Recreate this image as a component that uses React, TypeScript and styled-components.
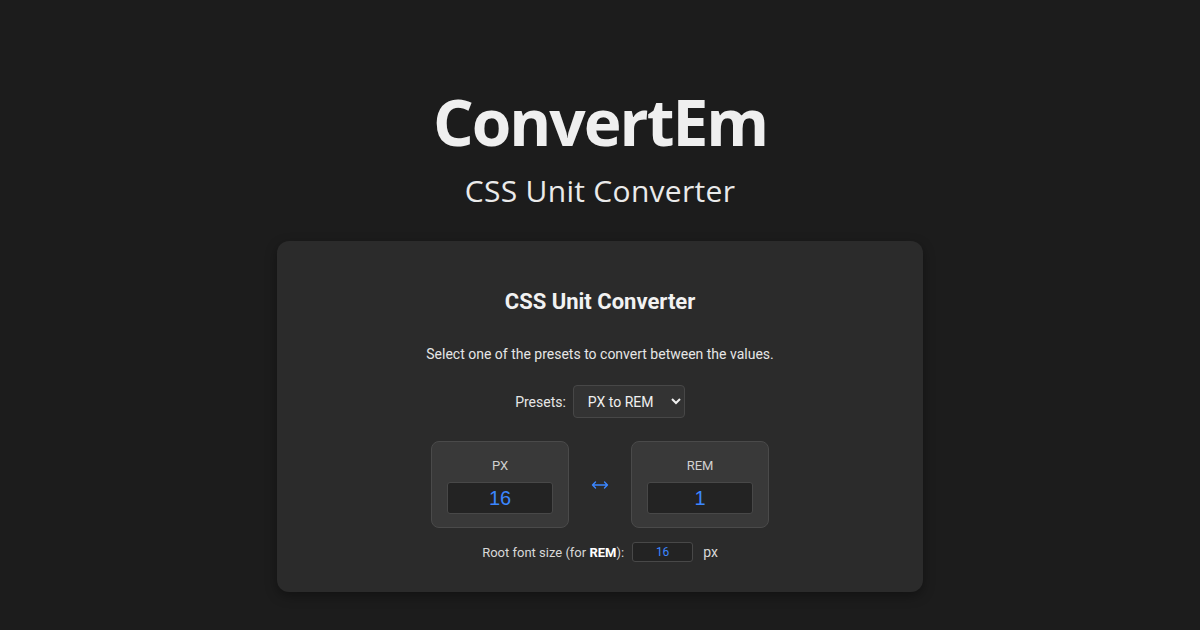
import styled, { createGlobalStyle } from "styled-components";
import { useState } from "react";

const GlobalStyle = createGlobalStyle`
  html, body {
    margin: 0;
    padding: 0;
    background: #1c1c1c;
  }
  body {
    font-family: Roboto, "Liberation Sans", Arial, sans-serif;
    color: #eeeeee;
  }
`;

const Page = styled.main`
  width: 1200px;
  height: 630px;
  display: flex;
  flex-direction: column;
  align-items: center;
  box-sizing: border-box;
  padding-top: 84px;
`;

const Title = styled.h1`
  margin: 0;
  font-family: "Open Sans", "Noto Sans", sans-serif;
  font-weight: 700;
  font-size: 64px;
  line-height: 76px;
  letter-spacing: -2px;
  color: #efefef;
`;

const Subtitle = styled.p`
  margin: 13px 0 0;
  font-family: "Open Sans", "Noto Sans", sans-serif;
  font-weight: 400;
  font-size: 30px;
  line-height: 36px;
  letter-spacing: 0.3px;
  color: #eaeaea;
`;

const Card = styled.section`
  margin-top: 32px;
  width: 646px;
  height: 351px;
  box-sizing: border-box;
  background: #2b2b2b;
  border-radius: 12px;
  box-shadow: 0 4px 12px rgba(0, 0, 0, 0.35);
  display: flex;
  flex-direction: column;
  align-items: center;
  padding-top: 48px;
`;

const CardTitle = styled.h2`
  margin: 0;
  font-size: 22px;
  line-height: 26px;
  font-weight: 700;
  color: #f2f2f2;
`;

const Description = styled.p`
  margin: 31px 0 0;
  font-size: 14px;
  line-height: 17px;
  color: #e6e6e6;
`;

const PresetRow = styled.div`
  margin-top: 22px;
  display: flex;
  align-items: center;
  gap: 7px;
  font-size: 14px;
  color: #e6e6e6;
`;

const Select = styled.select`
  width: 112px;
  height: 33px;
  background: #333333;
  color: #f0f0f0;
  border: 1px solid #474747;
  border-radius: 4px;
  font-family: Roboto, "Liberation Sans", sans-serif;
  font-size: 14px;
  padding: 0 6px 0 10px;
  color-scheme: dark;
`;

const UnitRow = styled.div`
  margin-top: 23px;
  display: flex;
  align-items: center;
  gap: 21px;
`;

const UnitBox = styled.div`
  width: 138px;
  height: 87px;
  box-sizing: border-box;
  background: #393939;
  border: 1px solid #4a4a4a;
  border-radius: 8px;
  display: flex;
  flex-direction: column;
  align-items: center;
  padding-top: 16px;
`;

const UnitLabel = styled.span`
  font-size: 13px;
  line-height: 16px;
  color: #d0d0d0;
`;

const ValueInput = styled.input`
  margin-top: 8px;
  width: 106px;
  height: 32px;
  box-sizing: border-box;
  background: #232323;
  border: 1px solid #484848;
  border-radius: 3px;
  color: #3b86ff;
  font-family: "Liberation Sans", Arial, sans-serif;
  font-size: 20px;
  text-align: center;
  outline: none;
`;

const Arrow = styled.span`
  width: 20px;
  display: flex;
  justify-content: center;
  color: #3b86ff;
`;

const RootRow = styled.div`
  margin-top: 14px;
  display: flex;
  align-items: center;
  font-size: 13px;
  color: #d8d8d8;

  b {
    color: #ffffff;
  }
`;

const RootInput = styled.input`
  margin-left: 8px;
  margin-right: 10px;
  width: 61px;
  height: 20px;
  box-sizing: border-box;
  background: #232323;
  border: 1px solid #484848;
  border-radius: 3px;
  color: #3b86ff;
  font-family: Roboto, "Liberation Sans", sans-serif;
  font-size: 12px;
  text-align: center;
  outline: none;
`;

const Px = styled.span`
  font-size: 14px;
`;

export default function App() {
  const [px, setPx] = useState("16");
  const [root, setRoot] = useState("16");
  const rem = String(Number(px) / (Number(root) || 16));

  return (
    <>
      <GlobalStyle />
      <Page>
        <Title>ConvertEm</Title>
        <Subtitle>CSS Unit Converter</Subtitle>
        <Card>
          <CardTitle>CSS Unit Converter</CardTitle>
          <Description>Select one of the presets to convert between the values.</Description>
          <PresetRow>
            <label htmlFor="preset">Presets:</label>
            <Select id="preset" defaultValue="px-rem">
              <option value="px-rem">PX to REM</option>
              <option value="px-em">PX to EM</option>
            </Select>
          </PresetRow>
          <UnitRow>
            <UnitBox>
              <UnitLabel>PX</UnitLabel>
              <ValueInput value={px} onChange={(e) => setPx(e.target.value)} />
            </UnitBox>
            <Arrow>
              <svg width="18" height="10" viewBox="0 0 18 10" fill="none" stroke="currentColor" strokeWidth="1.4" strokeLinecap="round" strokeLinejoin="round">
                <path d="M1.5 5h15M4.5 2L1.5 5l3 3M13.5 2l3 3-3 3" />
              </svg>
            </Arrow>
            <UnitBox>
              <UnitLabel>REM</UnitLabel>
              <ValueInput value={rem} readOnly />
            </UnitBox>
          </UnitRow>
          <RootRow>
            <span>
              Root font size (for <b>REM</b>):
            </span>
            <RootInput value={root} onChange={(e) => setRoot(e.target.value)} />
            <Px>px</Px>
          </RootRow>
        </Card>
      </Page>
    </>
  );
}
